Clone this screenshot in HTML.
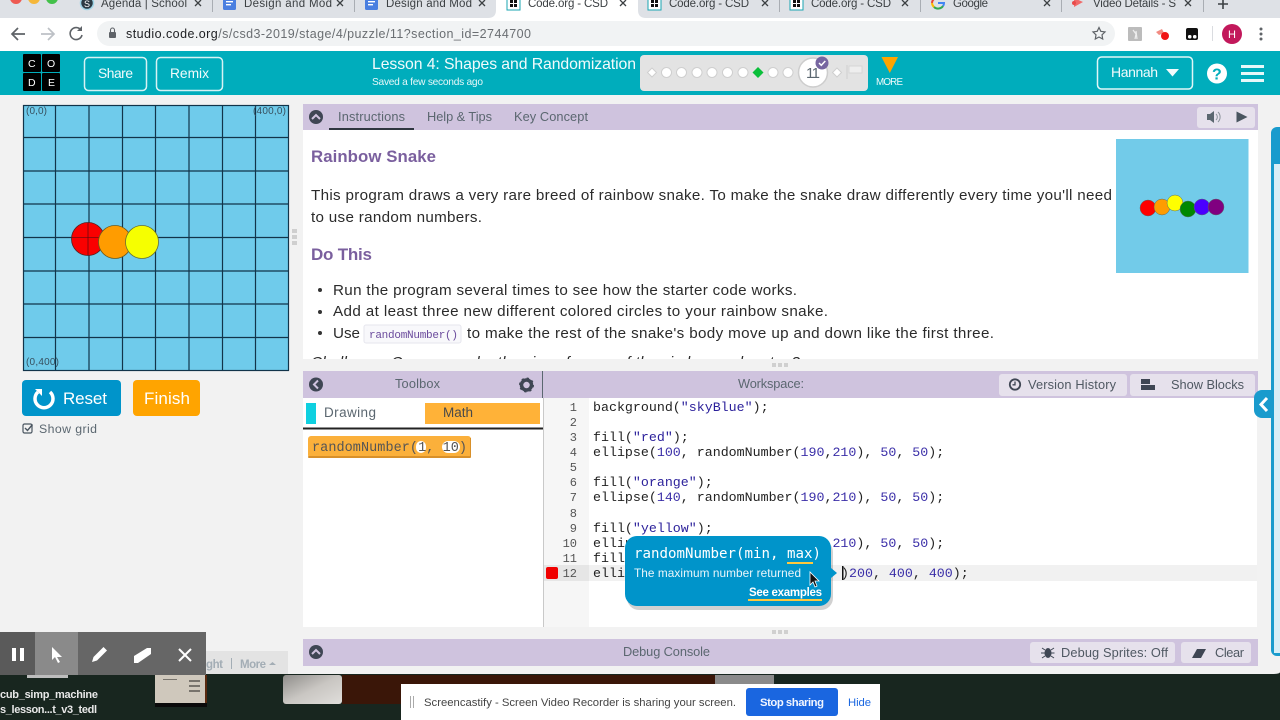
<!DOCTYPE html>
<html><head><meta charset="utf-8"><title>Code.org</title>
<style>
html,body{margin:0;padding:0;width:1280px;height:720px;overflow:hidden;background:#18261f}
svg{display:block;position:absolute;left:0;top:0;filter:blur(.35px)}
text{font-family:"Liberation Sans",sans-serif;fill:#5b6770;font-size:12.800px}
.m{font-family:"Liberation Mono",monospace;font-size:13.3px;fill:#222}
.n{font-family:"Liberation Mono",monospace;font-size:12px;fill:#555;text-anchor:end}
.s{fill:#2a1f9a}.d{fill:#3b2fa8}
.t{font-size:11.5px;fill:#3c4043}
.x{stroke:#3c4043;stroke-width:1.3;fill:none}
.b{font-size:15.200px;fill:#2b2b2b}
.w{fill:#fff}
.tb{fill:#e6e1ec}
</style></head><body>
<svg width="1280" height="720" viewBox="0 0 1280 720" xmlns="http://www.w3.org/2000/svg">
<defs><linearGradient id="gr" x1="0" y1="0" x2="1" y2="1"><stop offset="0" stop-color="#8f8d8a"/><stop offset=".5" stop-color="#c9c6c2"/><stop offset="1" stop-color="#e0dedb"/></linearGradient></defs>
<rect width="1280" height="720" fill="#18261f"/>
<rect x="0" y="0" width="1280" height="18" fill="#dee1e6"/>
<circle cx="16" cy="-2" r="6" fill="#ee5a52"/><circle cx="34" cy="-2" r="6" fill="#f5b73a"/><circle cx="52" cy="-2" r="6" fill="#43c14a"/>
<path d="M488 18q8 0 8-8V0h142v10q0 8 8 8z" fill="#fff"/>
<g fill="#a9adb3"><rect x="212" y="0" width="1" height="12"/><rect x="354" y="0" width="1" height="12"/><rect x="779" y="0" width="1" height="12"/><rect x="920" y="0" width="1" height="12"/><rect x="1061" y="0" width="1" height="12"/><rect x="1203" y="0" width="1" height="12"/></g>
<circle cx="87" cy="3" r="6.5" fill="#2b3a44" stroke="#9fd4e6" stroke-width="1.5"/><text x="84" y="7" style="fill:#fff;font-size:9px">S</text>
<rect x="223" y="-4" width="13" height="14" rx="1.5" fill="#4a7fe0"/><rect x="226" y="1" width="7" height="1.4" fill="#fff"/><rect x="226" y="4" width="5" height="1.4" fill="#fff"/>
<rect x="365" y="-4" width="13" height="14" rx="1.5" fill="#4a7fe0"/><rect x="368" y="1" width="7" height="1.4" fill="#fff"/><rect x="368" y="4" width="5" height="1.4" fill="#fff"/>
<g id="c1"><rect x="507" y="-4" width="13" height="14" fill="#fff" stroke="#19a5b2" stroke-width="1"/><path d="M510 0h3v3h-3zM514 0h3v3h-3zM510 4h3v3h-3zM514 4h3v3h-3z" fill="#111"/></g>
<g transform="translate(141 0)"><rect x="507" y="-4" width="13" height="14" fill="#fff" stroke="#19a5b2" stroke-width="1"/><path d="M510 0h3v3h-3zM514 0h3v3h-3zM510 4h3v3h-3zM514 4h3v3h-3z" fill="#111"/></g>
<g transform="translate(283 0)"><rect x="507" y="-4" width="13" height="14" fill="#fff" stroke="#19a5b2" stroke-width="1"/><path d="M510 0h3v3h-3zM514 0h3v3h-3zM510 4h3v3h-3zM514 4h3v3h-3z" fill="#111"/></g>
<path d="M932 3a6 6 0 0 1 10-4" stroke="#ea4335" stroke-width="2" fill="none"/><path d="M932 3a6 6 0 0 0 2 4" stroke="#fbbc05" stroke-width="2" fill="none"/><path d="M934 7a6 6 0 0 0 9-1" stroke="#34a853" stroke-width="2" fill="none"/><path d="M938 3h6a5 5 0 0 1-1 3" stroke="#4285f4" stroke-width="2" fill="none"/>
<path d="M1074 -2l9 4-9 5z" fill="#f06a6a"/><circle cx="1074" cy="3" r="2" fill="#e84a4a"/>
<text class="t" x="101" y="7" textLength="86">Agenda | School</text>
<text class="t" x="244" y="7" textLength="88">Design and Mod</text>
<text class="t" x="386" y="7" textLength="86">Design and Mod</text>
<text class="t" x="528" y="7" textLength="80">Code.org - CSD</text>
<text class="t" x="669" y="7" textLength="80">Code.org - CSD</text>
<text class="t" x="811" y="7" textLength="80">Code.org - CSD</text>
<text class="t" x="953" y="7" textLength="35">Google</text>
<text class="t" x="1093" y="7" textLength="83">Video Details - S</text>
<g class="x">
<path d="M195 0l6 6M201 0l-6 6"/><path d="M337 0l6 6M343 0l-6 6"/><path d="M479 0l6 6M485 0l-6 6"/><path d="M620 0l6 6M626 0l-6 6"/><path d="M762 0l6 6M768 0l-6 6"/><path d="M902 0l6 6M908 0l-6 6"/><path d="M1044 0l6 6M1050 0l-6 6"/><path d="M1185 0l6 6M1191 0l-6 6"/></g>
<path d="M1218 4h10M1223 -1v10" stroke="#3c4043" stroke-width="1.6" fill="none"/>

<rect x="0" y="18" width="1280" height="33" fill="#fff"/>
<rect x="97" y="21" width="1018" height="25" rx="12.5" fill="#f1f3f4"/>
<path d="M25 34H13M18 28l-6 6 6 6" fill="none" stroke="#5f6368" stroke-width="1.7"/>
<path d="M41 34h12M48 28l6 6-6 6" fill="none" stroke="#bdc1c6" stroke-width="1.7"/>
<path d="M81 30a6 6 0 1 0 1 5" fill="none" stroke="#5f6368" stroke-width="1.6"/><path d="M82 26v5h-5z" fill="#5f6368"/>
<rect x="109" y="32" width="7" height="6" rx="1" fill="#5f6368"/><path d="M110.500 32v-2a2 2 0 0 1 4 0v2" fill="none" stroke="#5f6368" stroke-width="1.1"/>
<text x="126" y="38" textLength="405" style="font-size:12.5px;fill:#6a6e72"><tspan style="fill:#202124">studio.code.org</tspan>/s/csd3-2019/stage/4/puzzle/11?section_id=2744700</text>
<path d="M1099 27.500l1.800 3.800 4.200.6-3 2.900.7 4.200-3.700-2-3.700 2 .7-4.200-3-2.900 4.200-.6z" fill="none" stroke="#5f6368" stroke-width="1.2"/>
<rect x="1128" y="27" width="14" height="14" rx="1" fill="#bcbcbc"/><path d="M1133 30l3 4-1 5M1136 31l1 8" stroke="#eee" stroke-width="1.2" fill="none"/>
<path d="M1156 32l6-3 2 4-5 2z" fill="#f28b82"/><circle cx="1165" cy="36" r="4" fill="#f01414"/>
<rect x="1186" y="28" width="12" height="12" rx="2" fill="#111"/><rect x="1188" y="35" width="3.500" height="3.500" rx="1.500" fill="#fff"/><rect x="1193" y="35" width="3.500" height="3.500" rx="1.500" fill="#fff"/>
<rect x="1212" y="26" width="1" height="15" fill="#dadce0"/>
<circle cx="1232" cy="34" r="10" fill="#c2185b"/><text x="1228" y="38" style="font-size:11px;fill:#fff">H</text>
<g fill="#5f6368"><circle cx="1261" cy="29" r="1.500"/><circle cx="1261" cy="34" r="1.500"/><circle cx="1261" cy="39" r="1.500"/></g>

<rect x="0" y="51" width="1280" height="44" fill="#00adbc"/>
<g fill="#000"><rect x="23" y="54" width="18" height="18" rx="1"/><rect x="42" y="54" width="18" height="18" rx="1"/><rect x="23" y="73" width="18" height="18" rx="1"/><rect x="42" y="73" width="18" height="18" rx="1"/></g>
<text x="28" y="67" style="fill:#fff;font-size:10.500px">C</text><text x="47" y="67" style="fill:#fff;font-size:10.500px">O</text><text x="28" y="86" style="fill:#fff;font-size:10.500px">D</text><text x="48" y="86" style="fill:#fff;font-size:10.500px">E</text>
<rect x="84.500" y="57.500" width="62" height="33" rx="4" fill="none" stroke="#d6f2f4" stroke-width="1.500"/>
<rect x="156.500" y="57.500" width="66" height="33" rx="4" fill="none" stroke="#d6f2f4" stroke-width="1.500"/>
<text x="98" y="78" textLength="35" style="font-size:13.800px;fill:#f2fbfc">Share</text>
<text x="170" y="78" textLength="39" style="font-size:13.800px;fill:#f2fbfc">Remix</text>
<text x="372" y="69" textLength="264" style="font-size:15.800px;fill:#f2fbfc">Lesson 4: Shapes and Randomization</text>
<text x="372" y="85" textLength="111" style="font-size:10.200px;fill:#e6f7f8">Saved a few seconds ago</text>
<rect x="640" y="55" width="228" height="36" rx="4" fill="#e3e3e3"/>
<g fill="#fff" stroke="#cfcfcf"><path d="M652 68l4.500 4.500-4.500 4.500-4.500-4.500z"/><circle cx="666.500" cy="72.500" r="5"/><circle cx="681.500" cy="72.500" r="5"/><circle cx="697" cy="72.500" r="5"/><circle cx="712" cy="72.500" r="5"/><circle cx="727.500" cy="72.500" r="5"/><circle cx="743" cy="72.500" r="5"/><circle cx="773" cy="72.500" r="5"/><circle cx="788" cy="72.500" r="5"/><path d="M837 68l4.500 4.500-4.500 4.500-4.500-4.500z"/></g>
<path d="M758 67l5.500 5.500-5.500 5.500-5.500-5.500z" fill="#0bbf3a"/>
<circle cx="813" cy="72.500" r="14.500" fill="#fff" stroke="#cdcdcd" stroke-width="1.500"/>
<text x="806" y="78" textLength="14" style="font-size:15px;fill:#5b6770">11</text>
<circle cx="822" cy="63" r="6.500" fill="#7665a0"/><path d="M819 63l2.300 2.300 4-4.300" fill="none" stroke="#fff" stroke-width="1.500"/>
<path d="M847 65v14" stroke="#cfcfcf"/><path d="M849 66h13v7h-13z" fill="#eee" stroke="#cfcfcf" stroke-width=".7"/>
<path d="M881.500 57h16.500l-8.200 16z" fill="#ffa400"/>
<text x="876" y="85" textLength="27" style="font-size:9.800px;fill:#eefafb">MORE</text>
<rect x="1097.500" y="57" width="95" height="32" rx="4" fill="none" stroke="#e1f6f7" stroke-width="1.500"/>
<text x="1111" y="77" textLength="47" style="font-size:14px;fill:#f2fbfc">Hannah</text>
<path d="M1166 69h13l-6.500 7.500z" fill="#f2fbfc"/>
<circle cx="1217" cy="73.500" r="10" fill="#fff"/><text x="1212" y="79.500" style="font-size:16px;font-weight:bold;fill:#00adbc">?</text>
<g fill="#e6f8f9"><rect x="1241" y="65" width="23" height="3"/><rect x="1241" y="72" width="23" height="3"/><rect x="1241" y="79" width="23" height="3"/></g>

<rect x="0" y="95" width="1280" height="579" fill="#f2f2f2"/>
<path d="M1272 674h8v-2q0 2-8 2z" fill="#18261f"/>

<rect x="23" y="105" width="266" height="266" fill="#6fcbeb"/>
<g stroke="#12344a" stroke-width="1.200" fill="none"><path d="M55.500 105v266M89 105v266M122.500 105v266M155.500 105v266M189 105v266M222.500 105v266M255.500 105v266"/><path d="M23 137.500h266M23 171h266M23 204h266M23 237.500h266M23 271h266M23 304h266M23 337.500h266"/><rect x="23.500" y="105.500" width="265" height="265"/></g>
<circle cx="88" cy="239" r="16.500" fill="#fa0000" stroke="#5a2020" stroke-width=".8"/>
<path d="M72 237.500h32M88 223v32" stroke="#3a0f14" stroke-width=".6"/>
<circle cx="115" cy="242" r="16.500" fill="#ff9c00" stroke="#6a5a20" stroke-width=".8"/>
<circle cx="142" cy="242" r="16.500" fill="#f6ff00" stroke="#6a7030" stroke-width=".8"/>
<text x="26" y="114" textLength="21" style="font-size:10px;fill:#37505f">(0,0)</text>
<text x="253" y="114" textLength="33" style="font-size:10px;fill:#37505f">(400,0)</text>
<text x="26" y="365" textLength="33" style="font-size:10px;fill:#37505f">(0,400)</text>
<rect x="22" y="380" width="99" height="36" rx="4" fill="#0094ca"/>
<path d="M38 392a9 9 0 1 0 12 0" fill="none" stroke="#fff" stroke-width="3.500"/><path d="M35 389h7v7z" fill="#fff"/>
<text x="63" y="404" textLength="44" style="font-size:17px;fill:#fff">Reset</text>
<rect x="133" y="380" width="67" height="36" rx="4" fill="#ffa400"/>
<text x="144" y="404" textLength="46" style="font-size:17px;fill:#fff">Finish</text>
<rect x="23" y="424" width="9" height="9" rx="1.500" fill="none" stroke="#4a5560" stroke-width="1.200"/><path d="M25 428l2.500 2.500 5-6" fill="none" stroke="#4a5560" stroke-width="1.400"/>
<text x="39" y="433" textLength="58" style="font-size:12.300px;fill:#5b6770">Show grid</text>
<g fill="#cfcfcf"><rect x="292" y="229" width="5" height="4"/><rect x="292" y="235" width="5" height="4"/><rect x="292" y="241" width="5" height="4"/></g>

<rect x="303" y="104" width="955" height="256" fill="#fff"/>
<rect x="303" y="104" width="955" height="26" fill="#cfc3de"/>
<circle cx="316" cy="117" r="7" fill="#3f4654"/><path d="M312 119l4-4 4 4" fill="none" stroke="#cfc3de" stroke-width="2"/>
<text x="338" y="121" textLength="67">Instructions</text>
<rect x="329" y="128" width="85" height="2" fill="#2f3640"/>
<text x="427" y="121" textLength="65">Help &amp; Tips</text>
<text x="514" y="121" textLength="74">Key Concept</text>
<rect x="1197" y="107" width="58" height="21" rx="3" fill="#e6e1ec"/>
<path d="M1207 114h3l4-3v12l-4-3h-3z" fill="#5b6770"/><path d="M1216 114a4 4 0 0 1 0 6M1218 112a7 7 0 0 1 0 10" fill="none" stroke="#8a929a"/>
<path d="M1236.500 111.500l11 5.500-11 5.500z" fill="#4a5560"/>
<text x="311" y="162" textLength="125" style="font-size:16.800px;font-weight:bold;fill:#7a5f9e">Rainbow Snake</text>
<text class="b" x="311" y="200" textLength="801">This program draws a very rare breed of rainbow snake. To make the snake draw differently every time you'll need</text>
<text class="b" x="311" y="222" textLength="171">to use random numbers.</text>
<text x="311" y="260" textLength="61" style="font-size:17px;font-weight:bold;fill:#7a5f9e">Do This</text>
<g fill="#333"><circle cx="320" cy="290" r="2"/><circle cx="320" cy="312" r="2"/><circle cx="320" cy="333" r="2"/></g>
<text class="b" x="333" y="295" textLength="464">Run the program several times to see how the starter code works.</text>
<text class="b" x="333" y="316" textLength="495">Add at least three new different colored circles to your rainbow snake.</text>
<text class="b" x="333" y="338" textLength="27">Use</text>
<rect x="364" y="325" width="97" height="18" rx="2" fill="#f8f8fb" stroke="#e6e6ee"/>
<text x="369" y="338" textLength="89" style="font-family:'Liberation Mono',monospace;font-size:11px;fill:#6a4a9c">randomNumber()</text>
<text class="b" x="467" y="338" textLength="527">to make the rest of the snake's body move up and down like the first three.</text>
<text class="b" x="311" y="367" textLength="489" style="font-style:italic">Challenge: Can you make the size of some of the circles random too?</text>
<rect x="1116" y="139" width="132.500" height="134" fill="#72cbe9"/>
<g stroke="#5a6a6a" stroke-width=".5"><circle cx="1148" cy="208" r="8" fill="#f00"/><circle cx="1162" cy="207" r="8" fill="#ff9c00"/><circle cx="1175" cy="203" r="8" fill="#ff0"/><circle cx="1188" cy="209" r="8" fill="#080"/><circle cx="1202" cy="207" r="8" fill="#4a00ff"/><circle cx="1216" cy="207" r="8" fill="#800080"/></g>

<rect x="303" y="359" width="955" height="12" fill="#f2f2f2"/>
<g fill="#d0d0d0"><rect x="772" y="363" width="4" height="4"/><rect x="778" y="363" width="4" height="4"/><rect x="784" y="363" width="4" height="4"/></g>

<rect x="303" y="371" width="955" height="27" fill="#cfc3de"/>
<rect x="542" y="371" width="1" height="27" fill="#5b6770"/>
<circle cx="316" cy="384.500" r="7" fill="#3f4654"/><path d="M318 380.500l-4 4 4 4" fill="none" stroke="#cfc3de" stroke-width="2"/>
<text x="395" y="388" textLength="45">Toolbox</text>
<circle cx="526.500" cy="385" r="5" fill="none" stroke="#3f4654" stroke-width="3.500"/><circle cx="526.500" cy="385" r="6.500" fill="none" stroke="#3f4654" stroke-width="2" stroke-dasharray="2.200 2.900"/>
<text x="738" y="388" textLength="66">Workspace:</text>
<rect class="tb" x="999" y="374" width="128" height="22" rx="3"/>
<rect class="tb" x="1130" y="374" width="125" height="22" rx="3"/>
<circle cx="1015" cy="384.500" r="5.200" fill="none" stroke="#3f4654" stroke-width="1.800"/><path d="M1015 381.500v3.300h-2.500" fill="none" stroke="#3f4654" stroke-width="1.300"/>
<text x="1028" y="389" textLength="88" style="fill:#4f5862">Version History</text>
<rect x="1141" y="379" width="9" height="5" fill="#3f4654"/><rect x="1141" y="385" width="14" height="5" fill="#3f4654"/>
<text x="1171" y="389" textLength="73" style="fill:#4f5862">Show Blocks</text>

<rect x="303" y="398" width="954" height="229" fill="#fff"/>
<rect x="306" y="403" width="10" height="21" fill="#0fd0e0"/>
<text x="324" y="417" textLength="52" style="font-size:13.500px;fill:#5b6770">Drawing</text>
<rect x="425" y="403" width="115" height="21" fill="#ffb238"/>
<text x="443" y="417" textLength="30" style="font-size:13.500px;fill:#4a4a4a">Math</text>
<rect x="303" y="427.500" width="240" height="2" fill="#222"/>
<rect x="308" y="436" width="163" height="22" rx="3" fill="#fbb03b"/><rect x="308" y="456" width="163" height="2" rx="1" fill="#d8902a"/><rect x="470" y="438" width="1" height="19" fill="#d8902a"/>
<rect x="416" y="441" width="10" height="12" rx="5" fill="#fff"/><rect x="442" y="441" width="18" height="12" rx="6" fill="#fff"/>
<text x="312" y="451" textLength="155" style="font-family:'Liberation Mono',monospace;font-size:13.500px;fill:#555">randomNumber(1, 10)</text>
<rect x="543" y="398" width="1" height="229" fill="#c9c9c9"/>
<rect x="544" y="398" width="45" height="229" fill="#f6f6f6"/>
<rect x="589" y="565" width="668" height="16" fill="#f1f1f1"/><rect x="544" y="565" width="45" height="16" fill="#e6e6e6"/>
<rect x="546" y="567" width="12" height="12" rx="2" fill="#f00000"/>
<text class="n" x="577" y="411">1</text><text class="n" x="577" y="426">2</text><text class="n" x="577" y="441">3</text><text class="n" x="577" y="456">4</text><text class="n" x="577" y="471">5</text><text class="n" x="577" y="486">6</text><text class="n" x="577" y="501">7</text><text class="n" x="577" y="517">8</text><text class="n" x="577" y="532">9</text><text class="n" x="577" y="547">10</text><text class="n" x="577" y="562">11</text><text class="n" x="577" y="577">12</text>
<text class="m" x="593" y="411">background(<tspan class="s">"skyBlue"</tspan>);</text>
<text class="m" x="593" y="441">fill(<tspan class="s">"red"</tspan>);</text>
<text class="m" x="593" y="456">ellipse(<tspan class="d">100</tspan>, randomNumber(<tspan class="d">190</tspan>,<tspan class="d">210</tspan>), <tspan class="d">50</tspan>, <tspan class="d">50</tspan>);</text>
<text class="m" x="593" y="486">fill(<tspan class="s">"orange"</tspan>);</text>
<text class="m" x="593" y="501">ellipse(<tspan class="d">140</tspan>, randomNumber(<tspan class="d">190</tspan>,<tspan class="d">210</tspan>), <tspan class="d">50</tspan>, <tspan class="d">50</tspan>);</text>
<text class="m" x="593" y="532">fill(<tspan class="s">"yellow"</tspan>);</text>
<text class="m" x="593" y="547">ellipse(<tspan class="d">180</tspan>, randomNumber(<tspan class="d">190</tspan>,<tspan class="d">210</tspan>), <tspan class="d">50</tspan>, <tspan class="d">50</tspan>);</text>
<text class="m" x="593" y="562">fill(<tspan class="s">"green"</tspan>);</text>
<text class="m" x="593" y="577">ellipse(</text>
<text class="m" x="841" y="577">)<tspan class="d">200</tspan>, <tspan class="d">400</tspan>, <tspan class="d">400</tspan>);</text>
<rect x="842" y="566" width="1.500" height="14" fill="#111"/>

<rect x="627" y="540" width="206" height="70" rx="12" fill="#000" opacity=".18"/>
<rect x="625" y="536" width="206" height="70" rx="12" fill="#0094ca"/>
<path d="M831 568l6 5-6 5z" fill="#0094ca"/>
<text x="634" y="558" textLength="187" style="font-family:'DejaVu Sans Mono',monospace;font-size:14.100px;fill:#fff">randomNumber(min, max)</text>
<rect x="787" y="562" width="26" height="2" fill="#ffc83d"/>
<text x="634" y="577" textLength="167" style="font-size:11.800px;fill:#eaf6fb">The maximum number returned</text>
<text x="749" y="596" textLength="73" style="font-size:11.500px;font-weight:bold;fill:#fff">See examples</text>
<rect x="748" y="599" width="74" height="2" fill="#ffc83d"/>
<path d="M810 572v13l3-3 2 5 2-1-2-5h4z" fill="#111" stroke="#fff" stroke-width=".8"/>

<g fill="#d0d0d0"><rect x="772" y="630" width="4" height="4"/><rect x="778" y="630" width="4" height="4"/><rect x="784" y="630" width="4" height="4"/></g>
<rect x="303" y="639" width="955" height="27" fill="#cfc3de"/>
<circle cx="316" cy="652" r="7" fill="#3f4654"/><path d="M312 654l4-4 4 4" fill="none" stroke="#cfc3de" stroke-width="2"/>
<text x="623" y="656" textLength="87">Debug Console</text>
<rect class="tb" x="1030" y="642" width="145" height="21" rx="3"/>
<rect class="tb" x="1181" y="642" width="70" height="21" rx="3"/>
<ellipse cx="1048" cy="653" rx="3.500" ry="5" fill="#3f4654"/><path d="M1042 648l3 2M1054 648l-3 2M1041 653h13.500M1042 658l3-2M1054 658l-3-2" stroke="#3f4654" fill="none"/>
<text x="1061" y="657" textLength="107" style="fill:#4f5862">Debug Sprites: Off</text>
<path d="M1192 658l5-9h9l-5 9z" fill="#3f4654"/>
<text x="1215" y="657" textLength="29" style="fill:#4f5862">Clear</text>

<path d="M1280 127h-3a6 6 0 0 0-6 6v517a6 6 0 0 0 6 6h3z" fill="#199bcd"/>
<rect x="1274" y="164" width="6" height="489" fill="#d8eef6"/>
<path d="M1272 390h-10a8 8 0 0 0-8 8v12a8 8 0 0 0 8 8h10z" fill="#199bcd"/>
<path d="M1267 398l-6 6.500 6 6.500" fill="none" stroke="#fff" stroke-width="3"/>

<rect x="342" y="675" width="373" height="29" fill="#3a1608"/>
<rect x="715" y="675" width="59" height="9" fill="#8a8a8a"/>
<rect x="283" y="675" width="59" height="29" rx="3" fill="url(#gr)"/>
<rect x="155" y="675" width="52" height="28" fill="#cfc8bc"/><rect x="155" y="703" width="52" height="4" fill="#0b0b0b"/><rect x="205" y="675" width="2" height="28" fill="#5a2a10"/>
<g fill="#77736c"><rect x="163" y="679" width="14" height="1"/><rect x="189" y="680" width="11" height="2"/><rect x="189" y="685" width="11" height="2"/><rect x="189" y="690" width="11" height="2"/></g>
<rect x="27" y="675" width="41" height="3" fill="#bdbdbd"/>
<text x="0" y="698" textLength="98" style="font-size:11px;font-weight:bold;fill:#e8e8e8">cub_simp_machine</text>
<text x="0" y="713" textLength="97" style="font-size:11px;font-weight:bold;fill:#e8e8e8">s_lesson...t_v3_tedl</text>
<rect x="200" y="651" width="88" height="23" fill="#e3e3e3"/>
<text x="206" y="668" textLength="17" style="font-size:11.500px;font-weight:bold;fill:#a3adb5">ght</text>
<rect x="231" y="658" width="1" height="11" fill="#a3adb5"/>
<text x="240" y="668" textLength="26" style="font-size:11.500px;font-weight:bold;fill:#a3adb5">More</text>
<path d="M269 665l3.500-3 3.500 3z" fill="#a3adb5"/>
<rect x="0" y="632" width="206" height="43" fill="#666"/>
<rect x="0" y="632" width="35" height="43" fill="#5a5a5a"/>
<rect x="35" y="632" width="43" height="43" fill="#8a8a8a"/>
<rect x="12" y="648" width="4" height="13" fill="#fff"/><rect x="20" y="648" width="4" height="13" fill="#fff"/>
<path d="M52 647v13l3-3 3 6 2-1-3-5h5z" fill="#fff"/>
<path d="M92 662l1.500-5 10-10 3.500 3.500-10 10z" fill="#fff"/>
<path d="M134 656l13-8h4v6l-13 9h-4z" fill="#fff"/>
<path d="M179 649l12 12M191 649l-12 12" stroke="#fff" stroke-width="2" fill="none"/>

<rect x="401" y="684" width="479" height="36" fill="#fff"/>
<rect x="410" y="696" width="1" height="12" fill="#aaa"/><rect x="413" y="696" width="1" height="12" fill="#aaa"/>
<text x="424" y="706" textLength="312" style="font-size:11.300px;fill:#444">Screencastify - Screen Video Recorder is sharing your screen.</text>
<rect x="746" y="688" width="92" height="28" rx="3" fill="#1a66e0"/>
<text x="760" y="706" textLength="64" style="font-size:11.300px;font-weight:bold;fill:#f2f6ff">Stop sharing</text>
<text x="848" y="706" textLength="23" style="font-size:11.300px;fill:#1a66e0">Hide</text>
</svg>
</body></html>
